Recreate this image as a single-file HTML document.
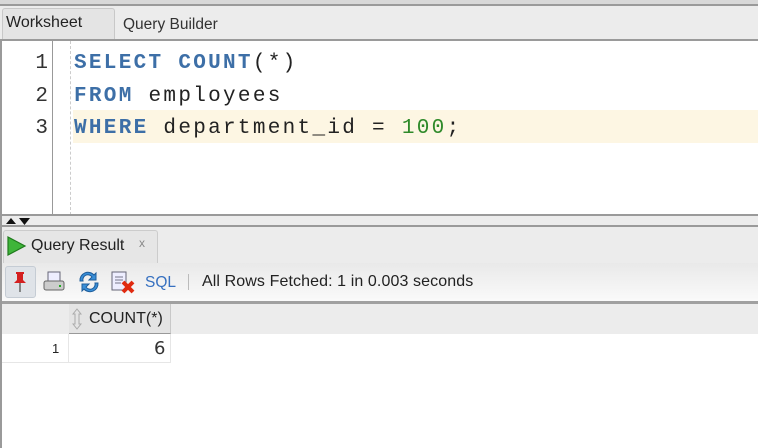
<!DOCTYPE html>
<html><head><meta charset="utf-8"><style>
*{margin:0;padding:0;box-sizing:border-box}
body{width:758px;height:448px;overflow:hidden;background:#fff;position:relative;font-family:"Liberation Sans",sans-serif}
.abs{position:absolute}
.code{font-family:"Liberation Mono",monospace;font-size:21px;letter-spacing:2.3px;color:#222;white-space:pre;line-height:32.5px}
.kw{color:#3d6fa7;font-weight:bold}
</style></head><body>
<div class="abs" style="left:0;top:0;width:758px;height:4px;background:#d8d8d8"></div>
<div class="abs" style="left:0;top:4px;width:758px;height:2px;background:#9a9a9a"></div>
<div class="abs" style="left:0;top:6px;width:758px;height:33px;background:#ececec"></div>
<div class="abs" style="left:2px;top:8px;width:113px;height:32px;background:#e4e4e4;border:1px solid #c8c8c8;border-bottom:none;border-radius:3px 3px 0 0"></div>
<div class="abs" style="left:6px;top:14px;font-size:16px;color:#222">Worksheet</div>
<div class="abs" style="left:123px;top:16px;font-size:15.5px;color:#333">Query Builder</div>
<div class="abs" style="left:0;top:39px;width:758px;height:2px;background:#9a9a9a"></div>
<div class="abs" style="left:0;top:39px;width:2px;height:409px;background:#9a9a9a"></div>
<div class="abs" style="left:52px;top:41px;width:1px;height:174px;background:#999"></div>
<div class="abs" style="left:70px;top:41px;height:174px;border-left:1px dashed #ccc"></div>
<div class="abs" style="left:73px;top:110px;width:685px;height:33px;background:#fdf6e3"></div>
<div class="abs code" style="left:0;top:48px;width:48px;text-align:right;color:#333;letter-spacing:0">1
2
3</div>
<div class="abs code" style="left:74px;top:48px"><span class="kw">SELECT</span> <span class="kw">COUNT</span>(*)
<span class="kw">FROM</span> employees
<span class="kw">WHERE</span> department_id = <span style="color:#2f8a2a">100</span>;</div>
<div class="abs" style="left:0;top:214px;width:758px;height:2px;background:#9a9a9a"></div>
<div class="abs" style="left:2px;top:216px;width:756px;height:10px;background:#ececec"></div>
<svg class="abs" style="left:5px;top:217px" width="32" height="9"><path d="M1 7 L6 1 L11 7Z M14 1 L25 1 L19.5 8Z" fill="#111"/></svg>
<div class="abs" style="left:2px;top:225px;width:756px;height:2px;background:#9a9a9a"></div>
<div class="abs" style="left:2px;top:227px;width:756px;height:36px;background:#ececec"></div>
<div class="abs" style="left:3px;top:230px;width:155px;height:33px;background:#e6e6e6;border:1px solid #ccc;border-bottom:none;border-radius:3px 3px 0 0"></div>
<svg class="abs" style="left:6px;top:235px" width="22" height="22"><path d="M2 2 L19 11 L2 20Z" fill="#3fb53a" stroke="#1f7a1c" stroke-width="1.2"/></svg>
<div class="abs" style="left:31px;top:237px;font-size:16px;color:#222">Query Result</div>
<div class="abs" style="left:139px;top:236px;font-size:12px;color:#888">x</div>
<div class="abs" style="left:2px;top:263px;width:756px;height:38px;background:linear-gradient(#e9e9e9,#fafafa)"></div>
<div class="abs" style="left:5px;top:266px;width:31px;height:32px;background:#dfe3e8;border:1px solid #c5ccd4;border-radius:3px"></div>
<svg class="abs" style="left:10px;top:270px" width="20" height="24"><path d="M6 2h8v2h-1v6l3 3H4l3-3V4H6z" fill="#d42020"/><path d="M10 13v9" stroke="#666" stroke-width="1.5"/></svg>
<svg class="abs" style="left:42px;top:270px" width="24" height="24"><rect x="6" y="2" width="12" height="11" fill="#eef" stroke="#667"/><rect x="2" y="11" width="20" height="9" rx="2" fill="#ccc" stroke="#666"/><rect x="17" y="15" width="2" height="2" fill="#2a2"/></svg>
<svg class="abs" style="left:76px;top:269px" width="26" height="26"><path d="M4 12a8 8 0 0 1 14-6l2-2v7h-7l3-3a5 5 0 0 0-9 4z" fill="#3a8fd8" stroke="#1d5c9a"/><path d="M22 14a8 8 0 0 1-14 6l-2 2v-7h7l-3 3a5 5 0 0 0 9-4z" fill="#3a8fd8" stroke="#1d5c9a"/></svg>
<svg class="abs" style="left:110px;top:270px" width="26" height="26"><rect x="2" y="2" width="14" height="18" fill="#eef" stroke="#667"/><path d="M5 7h8M5 10h8M5 13h6" stroke="#778"/><path d="M13 12l10 10M23 12l-10 10" stroke="#e02a10" stroke-width="4"/></svg>
<div class="abs" style="left:145px;top:274px;font-size:15.5px;color:#3670c0">SQL</div>
<div class="abs" style="left:188px;top:274px;width:1px;height:16px;background:#bbb"></div>
<div class="abs" style="left:202px;top:273px;font-size:16px;color:#222;letter-spacing:0.1px">All Rows Fetched: 1 in 0.003 seconds</div>
<div class="abs" style="left:2px;top:301px;width:756px;height:3px;background:#a0a0a0"></div>
<div class="abs" style="left:2px;top:304px;width:756px;height:30px;background:#ececec"></div>
<div class="abs" style="left:69px;top:304px;width:102px;height:30px;background:#e4e4e4;border-right:1px solid #c8c8c8;border-bottom:1px solid #999"></div>
<svg class="abs" style="left:72px;top:308px" width="10" height="22"><path d="M5 1l4 5-2 0v10h2l-4 5-4-5h2V6H1z" fill="none" stroke="#aaa"/></svg>
<div class="abs" style="left:89px;top:310px;font-size:16px;color:#222">COUNT(*)</div>
<div class="abs" style="left:2px;top:334px;width:168px;height:29px;border-bottom:1px solid #e6e6e6"></div>
<div class="abs" style="left:68px;top:334px;width:1px;height:29px;background:#e6e6e6"></div>
<div class="abs" style="left:170px;top:334px;width:1px;height:29px;background:#e6e6e6"></div>
<div class="abs" style="left:52px;top:341px;font-size:13px;color:#222">1</div>
<div class="abs" style="left:154px;top:338px;font-size:18px;color:#333;font-family:'DejaVu Sans',sans-serif">6</div>
</body></html>
